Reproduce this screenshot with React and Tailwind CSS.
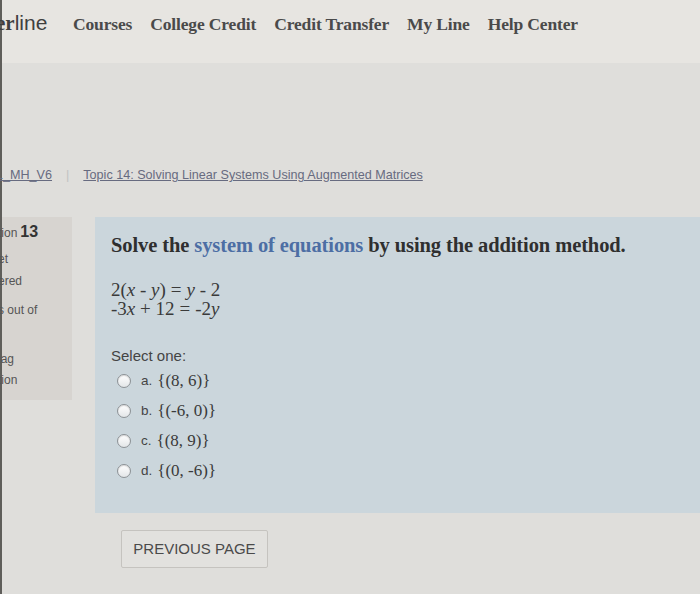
import React from 'react';

const navItems = ['Courses', 'College Credit', 'Credit Transfer', 'My Line', 'Help Center'];

const options = [
  { key: 'a', value: '{(8, 6)}' },
  { key: 'b', value: '{(-6, 0)}' },
  { key: 'c', value: '{(8, 9)}' },
  { key: 'd', value: '{(0, -6)}' },
];

const serif = "font-['Liberation_Serif','Times_New_Roman',serif]";
const sans = "font-['Liberation_Sans',Arial,sans-serif]";

const Radio = () => (
  <span className="inline-block h-[14px] w-[14px] shrink-0 rounded-full border border-[#8d9296] bg-[linear-gradient(180deg,#ffffff_0%,#e3e6e8_100%)] shadow-[inset_0_1px_1px_rgba(0,0,0,0.15)]" />
);

export default function App() {
  return (
    <div className={`flex h-[594px] w-[700px] overflow-hidden bg-[#dfdedb] ${sans}`}>
      <div className="w-[2px] shrink-0 bg-[#5f5e5a]" />
      <div className="flex min-w-0 flex-1 flex-col">
        <header className="flex h-[63px] shrink-0 items-start bg-[#e7e5e1] pt-[11px]">
          <span className={`ml-[-6px] w-[56px] text-[21px] leading-[24px] text-[#3f3f3f] ${sans}`}>
            <span className={`${serif} font-bold`}>er</span>line
          </span>
          <nav className={`ml-[21px] flex gap-[18px] ${serif} text-[17.5px] font-bold leading-[26px] tracking-[-0.15px] text-[#4a4a4a]`}>
            {navItems.map(item => (
              <span key={item}>{item}</span>
            ))}
          </nav>
        </header>

        <div className="flex h-[135px] shrink-0 items-end pb-[13px] text-[12.6px] text-[#676b80]">
          <span className="ml-[-6px] underline">1_MH_V6</span>
          <span className="mx-[14px] text-[#c2c2c2]">|</span>
          <span className="underline">Topic 14: Solving Linear Systems Using Augmented Matrices</span>
        </div>

        <div className="mt-[19px] flex items-start">
          <aside className="h-[183px] w-[70px] shrink-0 bg-[#d7d4d0] pt-[8px] text-[12px] leading-[14px] text-[#555]">
            <div className="ml-[-4px] flex items-baseline gap-[3px]">
              <span>tion</span>
              <span className="text-[16px] font-bold text-[#333]">13</span>
            </div>
            <div className="ml-[-4px] mt-[12px]">et</div>
            <div className="ml-[-4px] mt-[8px]">ered</div>
            <div className="ml-[-4px] mt-[15px]">s out of</div>
            <div className="ml-[-4px] mt-[35px]">lag</div>
            <div className="ml-[-4px] mt-[7px]">tion</div>
          </aside>

          <div className="flex min-w-0 flex-1 flex-col">
            <section className="ml-[23px] h-[296px] bg-[#cbd6dc] pl-[16px] pt-[16px]">
              <h2 className={`${serif} text-[20.5px] font-bold leading-[24px] tracking-[-0.1px] text-[#2f2f2f]`}>
                Solve the <span className="text-[#4d6ea4]">system of equations</span> by using the addition method.
              </h2>
              <div className={`mt-[23px] ${serif} text-[19px] leading-[19px] text-[#3a3a3a]`}>
                <div>2(<i>x</i> - <i>y</i>)<span className="mx-[5px]">=</span><i>y</i> - 2</div>
                <div>-3<i>x</i> + 12<span className="mx-[5px]">=</span>-2<i>y</i></div>
              </div>
              <div className="mt-[29px] text-[15px] leading-[18px] text-[#444]">Select one:</div>
              <div className="mt-[7px] flex flex-col gap-[12px] pl-[6px]">
                {options.map(option => (
                  <div key={option.key} className="flex h-[18px] items-center">
                    <Radio />
                    <span className="ml-[10px] text-[13.5px] text-[#444]">{option.key}.</span>
                    <span className={`ml-[5px] ${serif} text-[17px] text-[#3a3a3a]`}>{option.value}</span>
                  </div>
                ))}
              </div>
            </section>

            <div className="ml-[49px] mt-[17px]">
              <button
                type="button"
                className="h-[38px] w-[147px] rounded-[2px] border border-[#c5c3bf] bg-[#e2e1de] text-[15px] text-[#4a4a4a]"
              >
                PREVIOUS PAGE
              </button>
            </div>
          </div>
        </div>
      </div>
    </div>
  );
}
